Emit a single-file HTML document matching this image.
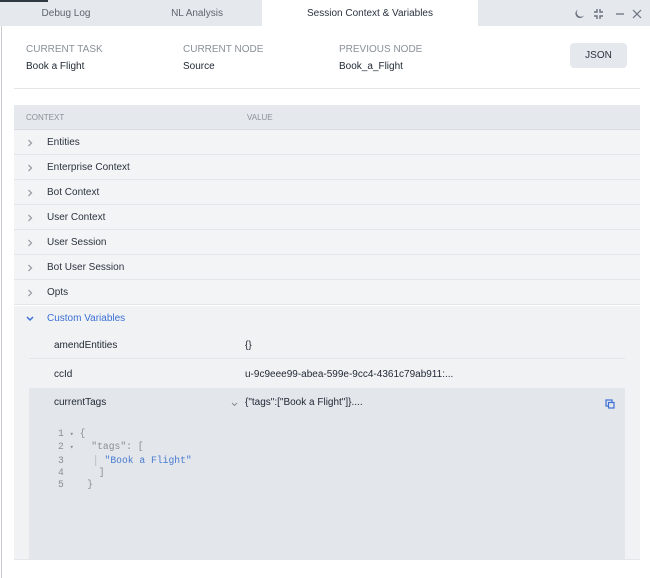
<!DOCTYPE html>
<html><head><style>
*{margin:0;padding:0;box-sizing:border-box}
body{width:650px;height:578px;background:#fff;font-family:"Liberation Sans",sans-serif;position:relative;overflow:hidden;font-size:10px;color:#1f2733}
.abs{position:absolute}
.tabbar{left:0;top:0;width:650px;height:26px;background:#e5e8ec;border-bottom:1px solid #e5e8ec}
.tab{top:0;height:26px;line-height:28px;text-align:center;font-size:10px;color:#5f6670}
.lbl{font-size:10px;color:#8a9099;top:44px}
.val{font-size:10px;color:#1f2733;top:61px}
.row{left:14px;width:626px;height:25px;background:#f3f4f6;border-bottom:1px solid #e4e6e9}
.row span{position:absolute;left:33px;top:7px;font-size:10px;color:#2b3340}
.row svg{position:absolute;left:13px;top:9px}
.code{font-family:"Liberation Mono",monospace;font-size:9.7px;line-height:12.3px;color:#8a8f96}
</style></head><body>
<div class="abs" style="left:0;top:0;width:48px;height:2px;background:#2f3944;z-index:2"></div>
<div class="abs tabbar"></div>
<div class="abs tab" style="left:0;width:132px">Debug Log</div>
<div class="abs tab" style="left:132px;width:130px">NL Analysis</div>
<div class="abs tab" style="left:262px;width:216px;background:#fff;color:#2b3340">Session Context &amp; Variables</div>
<svg class="abs" style="left:574px;top:8px" width="70" height="12" viewBox="0 0 70 12">
<path d="M4 1.5A4.5 4.5 0 1 0 10 7.5 3.5 3.5 0 0 1 4 1.5Z" fill="#6b7280"/>
<path d="M23 1v3h-3M26 1v3h3M23 11v-3h-3M26 11v-3h3" stroke="#6b7280" stroke-width="1.4" fill="none"/>
<path d="M42 6h8" stroke="#6b7280" stroke-width="1.3"/>
<path d="M59 2l8 8M67 2l-8 8" stroke="#6b7280" stroke-width="1.2"/>
</svg>
<div class="abs" style="left:1px;top:26px;width:1px;height:552px;background:#c9cdd2"></div>
<div class="abs lbl" style="left:26px">CURRENT TASK</div>
<div class="abs val" style="left:26px">Book a Flight</div>
<div class="abs lbl" style="left:183px">CURRENT NODE</div>
<div class="abs val" style="left:183px">Source</div>
<div class="abs lbl" style="left:339px">PREVIOUS NODE</div>
<div class="abs val" style="left:339px">Book_a_Flight</div>
<div class="abs" style="left:570px;top:43px;width:57px;height:25px;background:#e5e8ec;border-radius:4px;text-align:center;line-height:25px;font-size:10px;color:#2b3340">JSON</div>
<div class="abs" style="left:14px;top:88px;width:626px;height:1px;background:#e4e6e9"></div>
<div class="abs" style="left:14px;top:105px;width:626px;height:25px;background:#e5e8ec;border-bottom:1px solid #d8dce0"></div>
<div class="abs" style="left:26px;top:113px;font-size:8px;color:#8a9099">CONTEXT</div>
<div class="abs" style="left:247px;top:113px;font-size:8px;color:#8a9099">VALUE</div>
<div class="abs row" style="top:130px"><svg width="6" height="8"><path d="M1.5 1l3 3-3 3" stroke="#9aa0a8" stroke-width="1.3" fill="none"/></svg><span>Entities</span></div>
<div class="abs row" style="top:155px"><svg width="6" height="8"><path d="M1.5 1l3 3-3 3" stroke="#9aa0a8" stroke-width="1.3" fill="none"/></svg><span>Enterprise Context</span></div>
<div class="abs row" style="top:180px"><svg width="6" height="8"><path d="M1.5 1l3 3-3 3" stroke="#9aa0a8" stroke-width="1.3" fill="none"/></svg><span>Bot Context</span></div>
<div class="abs row" style="top:205px"><svg width="6" height="8"><path d="M1.5 1l3 3-3 3" stroke="#9aa0a8" stroke-width="1.3" fill="none"/></svg><span>User Context</span></div>
<div class="abs row" style="top:230px"><svg width="6" height="8"><path d="M1.5 1l3 3-3 3" stroke="#9aa0a8" stroke-width="1.3" fill="none"/></svg><span>User Session</span></div>
<div class="abs row" style="top:255px"><svg width="6" height="8"><path d="M1.5 1l3 3-3 3" stroke="#9aa0a8" stroke-width="1.3" fill="none"/></svg><span>Bot User Session</span></div>
<div class="abs row" style="top:280px"><svg width="6" height="8"><path d="M1.5 1l3 3-3 3" stroke="#9aa0a8" stroke-width="1.3" fill="none"/></svg><span>Opts</span></div>
<div class="abs" style="left:14px;top:306px;width:626px;height:254px;background:#f1f2f4;border-bottom:1px solid #e4e6e9"></div>
<svg class="abs" style="left:26px;top:316px" width="8" height="6"><path d="M1 1l3 3 3-3" stroke="#3b6fd6" stroke-width="1.5" fill="none"/></svg>
<div class="abs" style="left:47px;top:313px;font-size:10px;color:#3b6fd6">Custom Variables</div>
<div class="abs" style="left:29px;top:332px;width:596px;height:27px;background:#f1f2f4;border-bottom:1px solid #e4e6e9"></div>
<div class="abs" style="left:54px;top:340px">amendEntities</div>
<div class="abs" style="left:245px;top:340px">{}</div>
<div class="abs" style="left:29px;top:360px;width:596px;height:28px;background:#f1f2f4"></div>
<div class="abs" style="left:54px;top:369px">ccId</div>
<div class="abs" style="left:245px;top:369px">u-9c9eee99-abea-599e-9cc4-4361c79ab911:...</div>
<div class="abs" style="left:29px;top:388px;width:596px;height:171px;background:#e3e6eb"></div>
<div class="abs" style="left:54px;top:397px">currentTags</div>
<svg class="abs" style="left:231px;top:402px" width="7" height="5"><path d="M1 1l2.5 2.5L6 1" stroke="#8a9099" stroke-width="1" fill="none"/></svg>
<div class="abs" style="left:245px;top:397px">{"tags":["Book a Flight"]}....</div>
<svg class="abs" style="left:605px;top:399px" width="10" height="10"><rect x="1" y="1" width="6" height="6" fill="none" stroke="#3b6fd6" stroke-width="1.2"/><rect x="3.5" y="3.5" width="5.5" height="5.5" fill="#e3e6eb" stroke="#3b6fd6" stroke-width="1.2"/></svg>
<div class="abs code" style="left:58px;top:428px;white-space:pre">1 <span style="font-size:7px">▾</span> {
2 <span style="font-size:7px">▾</span>   "tags": [
3     <span style="color:#b0b5bb">│</span> <span style="color:#4a7bd0">"Book a Flight"</span>
4      ]
5    }</div>
</body></html>
